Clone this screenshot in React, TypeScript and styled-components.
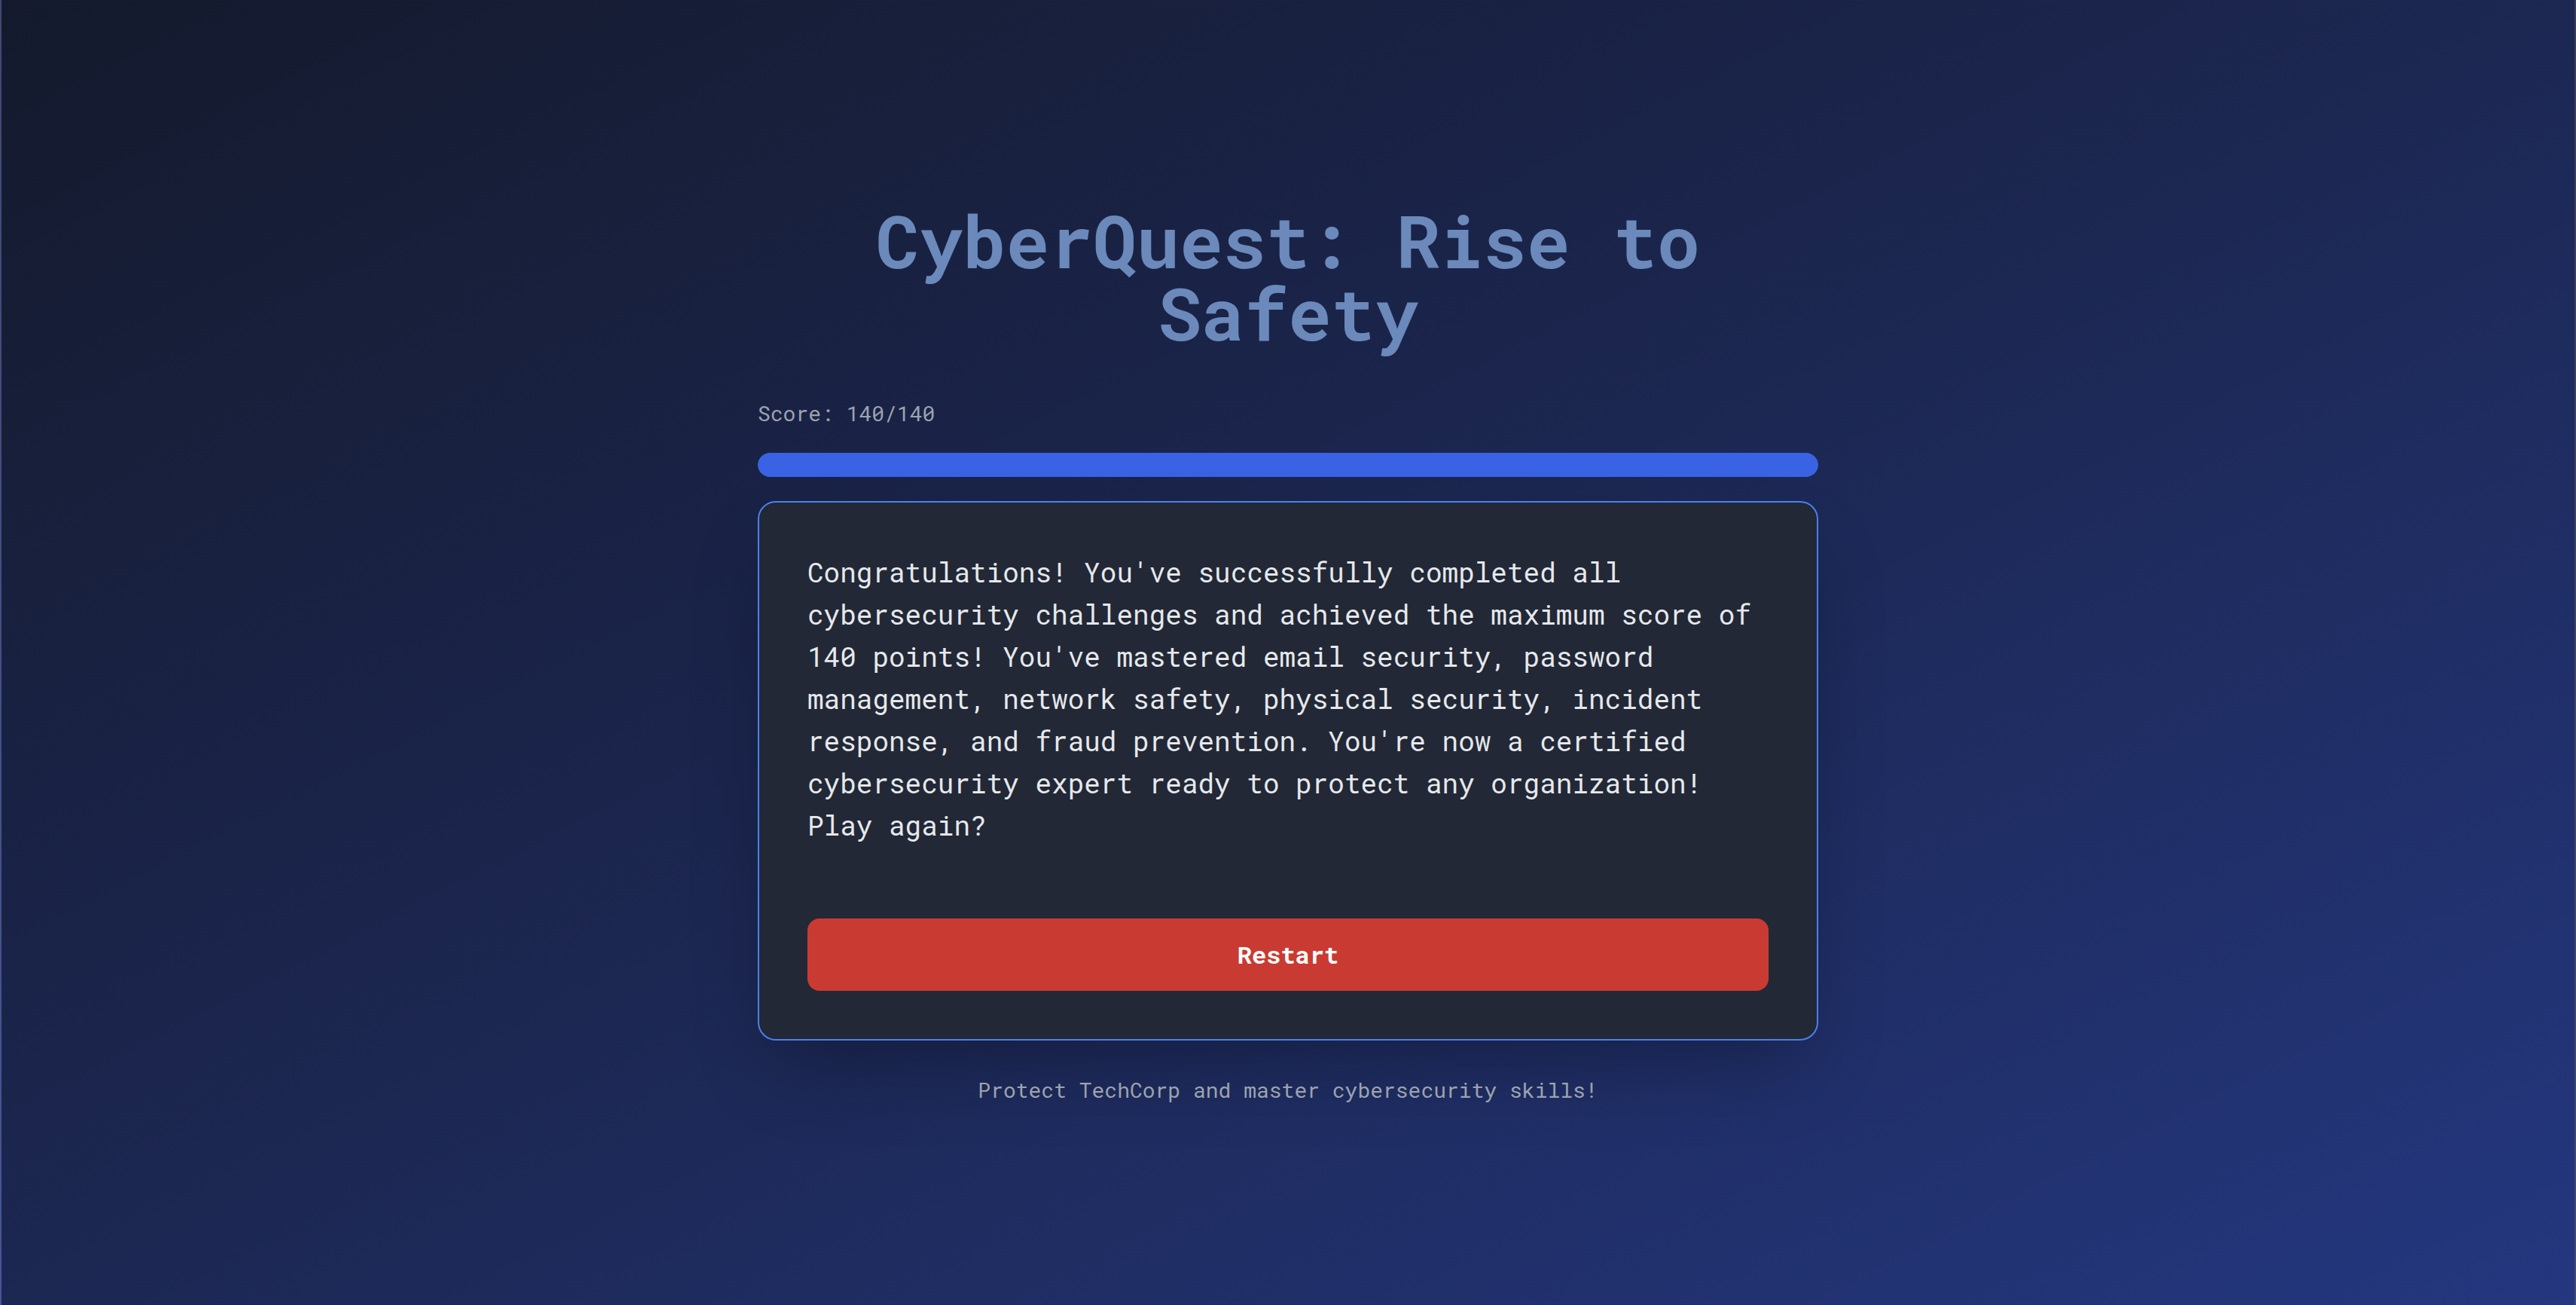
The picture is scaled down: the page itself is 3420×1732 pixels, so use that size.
import React, { useState } from 'react';
import styled, { createGlobalStyle } from 'styled-components';

const MAX_SCORE = 140;

const GlobalStyle = createGlobalStyle`
  html,
  body {
    margin: 0;
    padding: 0;
  }

  body {
    background: #141a2c;
    font-family: 'Roboto Mono', 'DejaVu Sans Mono', 'Liberation Mono', monospace;
    -webkit-font-smoothing: antialiased;
  }

  * {
    box-sizing: border-box;
  }
`;

const Page = styled.div`
  min-height: 100vh;
  padding-top: 6px;
  display: flex;
  align-items: center;
  justify-content: center;
  background: linear-gradient(to bottom right, #141a2c 0%, #1c2752 50%, #24377f 100%);
  border-left: 2px solid rgba(255, 255, 255, 0.16);
  border-right: 2px solid rgba(255, 255, 255, 0.16);
`;

const Shell = styled.main`
  width: 1408px;
  display: flex;
  flex-direction: column;
`;

const Title = styled.h1`
  margin: 0 0 66px;
  text-align: center;
  font-size: 96px;
  line-height: 96px;
  font-weight: 700;
  color: #6b89ba;
`;

const ScoreLabel = styled.div`
  margin-bottom: 32px;
  font-size: 28px;
  line-height: 40px;
  color: #9ca3af;
`;

const Track = styled.div`
  height: 32px;
  margin-bottom: 32px;
  border-radius: 9999px;
  background: #2b3553;
  overflow: hidden;
`;

const Fill = styled.div`
  height: 100%;
  border-radius: 9999px;
  background: #3963e4;
`;

const Card = styled.section`
  padding: 64px;
  border: 2px solid #4a80ee;
  border-radius: 24px;
  background: #222836;
  box-shadow: 0 50px 100px -24px rgba(0, 0, 0, 0.3);
`;

const Message = styled.p`
  margin: 0 0 96px;
  font-size: 36px;
  line-height: 56px;
  color: #e6e8ec;
`;

const RestartButton = styled.button`
  display: block;
  width: 100%;
  padding: 24px;
  border: none;
  border-radius: 16px;
  background: #c93b32;
  color: #ffffff;
  font-family: inherit;
  font-size: 32px;
  line-height: 48px;
  font-weight: 700;
  cursor: pointer;

  &:hover {
    background: #b8342c;
  }
`;

const Footer = styled.p`
  margin: 46px 0 0;
  text-align: center;
  font-size: 28px;
  line-height: 40px;
  color: #9ca3af;
`;

const App = () => {
  const [score, setScore] = useState(MAX_SCORE);
  const percent = (score / MAX_SCORE) * 100;

  return (
    <>
      <GlobalStyle />
      <Page>
        <Shell>
          <Title>CyberQuest: Rise to Safety</Title>
          <ScoreLabel>
            Score: {score}/{MAX_SCORE}
          </ScoreLabel>
          <Track>
            <Fill style={{ width: `${percent}%` }} />
          </Track>
          <Card>
            <Message>
              Congratulations! You've successfully completed all cybersecurity challenges and
              achieved the maximum score of 140 points! You've mastered email security, password
              management, network safety, physical security, incident response, and fraud
              prevention. You're now a certified cybersecurity expert ready to protect any
              organization! Play again?
            </Message>
            <RestartButton onClick={() => setScore(MAX_SCORE)}>Restart</RestartButton>
          </Card>
          <Footer>Protect TechCorp and master cybersecurity skills!</Footer>
        </Shell>
      </Page>
    </>
  );
};

export default App;
